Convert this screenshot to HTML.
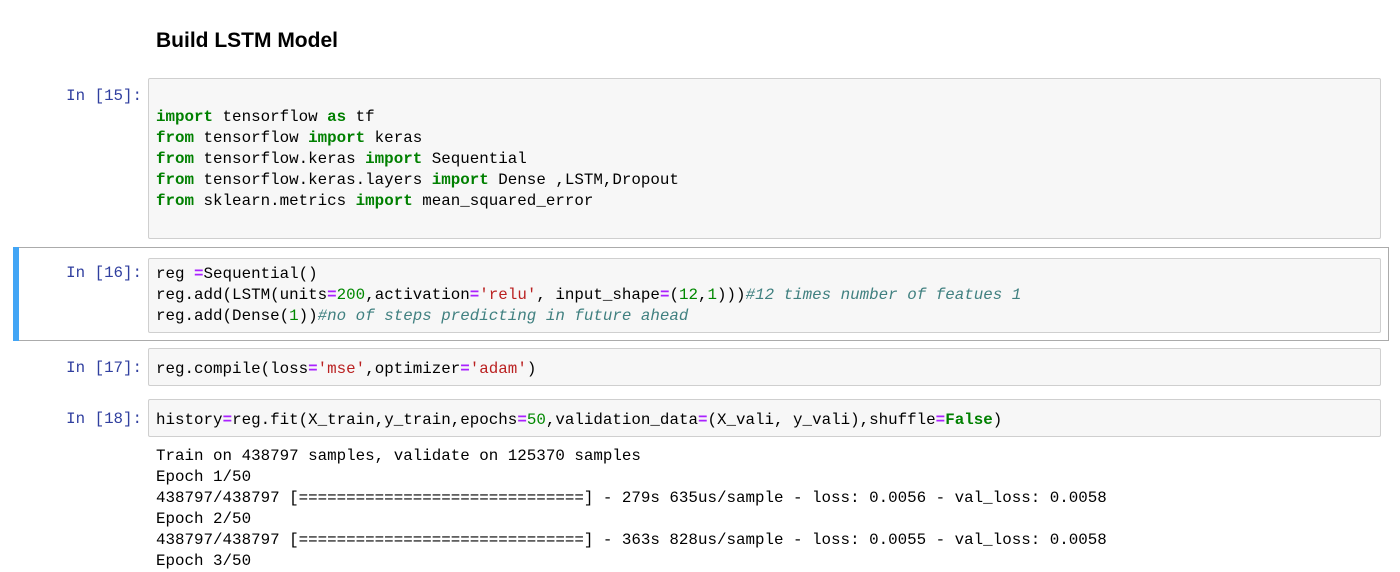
<!DOCTYPE html>
<html><head><style>
body{margin:0;background:#fff;width:1400px;height:558px;overflow:hidden;position:relative;font-family:"Liberation Mono",monospace;}
h1{position:absolute;left:156px;top:29px;margin:0;font:bold 21px "Liberation Sans",sans-serif;color:#000;}
.p{position:absolute;width:142px;left:0;text-align:right;color:#303F9F;font-size:15.8px;}
.box{position:absolute;left:148px;width:1231px;background:#f7f7f7;border:1px solid #cfcfcf;border-radius:2px;}
pre{margin:0;font-family:"Liberation Mono",monospace;font-size:15.85px;line-height:21px;color:#000;position:absolute;left:156px;white-space:pre;}
.k{color:#008000;font-weight:bold}.o{color:#AA22FF;font-weight:bold}.s{color:#BA2121}.n{color:#008800}.c{color:#408080;font-style:italic}
.sel{position:absolute;left:13px;top:247px;width:1375px;height:92px;border:1px solid #ababab;border-left:none;}
.bar{position:absolute;left:13px;top:247px;width:6px;height:94px;background:#42A5F5;}
</style></head><body>
<h1>Build LSTM Model</h1>

<div class="p" style="top:87px">In [15]:</div>
<div class="box" style="top:78px;height:159px"></div>
<pre style="top:107px"><span class="k">import</span> tensorflow <span class="k">as</span> tf
<span class="k">from</span> tensorflow <span class="k">import</span> keras
<span class="k">from</span> tensorflow.keras <span class="k">import</span> Sequential
<span class="k">from</span> tensorflow.keras.layers <span class="k">import</span> Dense ,LSTM,Dropout
<span class="k">from</span> sklearn.metrics <span class="k">import</span> mean_squared_error</pre>

<div class="sel"></div><div class="bar"></div>
<div class="p" style="top:264px">In [16]:</div>
<div class="box" style="top:258px;height:73px"></div>
<pre style="top:264px">reg <span class="o">=</span>Sequential()
reg.add(LSTM(units<span class="o">=</span><span class="n">200</span>,activation<span class="o">=</span><span class="s">'relu'</span>, input_shape<span class="o">=</span>(<span class="n">12</span>,<span class="n">1</span>)))<span class="c">#12 times number of featues 1</span>
reg.add(Dense(<span class="n">1</span>))<span class="c">#no of steps predicting in future ahead</span></pre>

<div class="p" style="top:359px">In [17]:</div>
<div class="box" style="top:348px;height:36px"></div>
<pre style="top:359px">reg.compile(loss<span class="o">=</span><span class="s">'mse'</span>,optimizer<span class="o">=</span><span class="s">'adam'</span>)</pre>

<div class="p" style="top:410px">In [18]:</div>
<div class="box" style="top:399px;height:36px"></div>
<pre style="top:410px">history<span class="o">=</span>reg.fit(X_train,y_train,epochs<span class="o">=</span><span class="n">50</span>,validation_data<span class="o">=</span>(X_vali, y_vali),shuffle<span class="o">=</span><span class="k">False</span>)</pre>

<pre style="top:446px">Train on 438797 samples, validate on 125370 samples
Epoch 1/50
438797/438797 [==============================] - 279s 635us/sample - loss: 0.0056 - val_loss: 0.0058
Epoch 2/50
438797/438797 [==============================] - 363s 828us/sample - loss: 0.0055 - val_loss: 0.0058
Epoch 3/50</pre>
</body></html>
